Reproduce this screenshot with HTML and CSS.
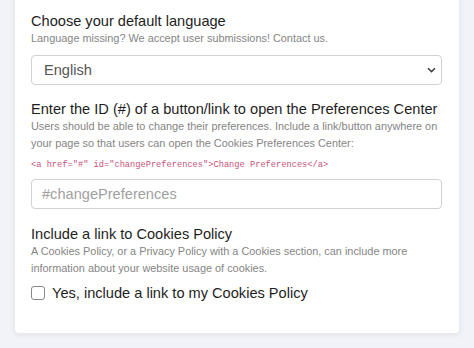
FILE: index.html
```html
<!DOCTYPE html>
<html>
<head>
<meta charset="utf-8">
<link rel="stylesheet" href="styles.css">
</head>
<body>
<div class="page">
  <div class="card">
    <div class="group">
      <h3 class="title">Choose your default language</h3>
      <p class="help">Language missing? We accept user submissions! Contact us.</p>
      <div class="select-wrap">
        <select class="control select">
          <option>English</option>
        </select>
        <svg class="chev" width="9" height="6" viewBox="0 0 9 6"><path d="M1 1.2 L4.5 4.6 L8 1.2" fill="none" stroke="#444" stroke-width="1.6"/></svg>
      </div>
    </div>
    <div class="group">
      <h3 class="title">Enter the ID (#) of a button/link to open the Preferences Center</h3>
      <p class="help">Users should be able to change their preferences. Include a link/button anywhere on your page so that users can open the Cookies Preferences Center:</p>
      <code class="code">&lt;a href="#" id="changePreferences"&gt;Change Preferences&lt;/a&gt;</code>
      <input class="control" type="text" placeholder="#changePreferences">
    </div>
    <div class="group">
      <h3 class="title">Include a link to Cookies Policy</h3>
      <p class="help">A Cookies Policy, or a Privacy Policy with a Cookies section, can include more information about your website usage of cookies.</p>
      <label class="check"><span class="box"></span>Yes, include a link to my Cookies Policy</label>
    </div>
  </div>
</div>
</body>
</html>
```
FILE: styles.css
```css
html, body { margin: 0; padding: 0; }
body {
  background: #f2f3f8;
  font-family: "Liberation Sans", Arial, sans-serif;
  width: 474px;
  height: 348px;
  overflow: hidden;
}
.page { padding: 0 15px; }
.card {
  background: #fff;
  margin-top: -10px;
  height: 343px;
  box-sizing: border-box;
  border-radius: 4px;
  box-shadow: 0 1px 6px rgba(120, 125, 150, 0.18);
  padding: 22px 17px 0 16px;
}
.group { margin-bottom: 14px; }
.group + .group { margin-top: 0; }
.title {
  margin: 0;
  font-weight: normal;
  font-size: 14.6px;
  line-height: 18px;
  color: #1e1e1e;
}
.help {
  margin: 0;
  font-size: 10.9px;
  line-height: 17px;
  color: #858585;
}
.select-wrap { position: relative; margin-top: 8px; }
.control {
  display: block;
  width: 100%;
  box-sizing: border-box;
  height: 30px;
  border: 1px solid #d2d2d2;
  border-radius: 4px;
  background: #fff;
  font-family: "Liberation Sans", Arial, sans-serif;
  font-size: 14.6px;
  color: #555;
  padding: 0 12px;
  outline: none;
}
.select { appearance: none; -webkit-appearance: none; }
.chev { position: absolute; right: 6px; top: 12px; }
input.control { padding: 0 10px; margin-bottom: 0; }
input.control::placeholder { color: #a0a0a0; }
.code {
  display: block;
  font-family: "Liberation Mono", monospace;
  font-size: 8.7px;
  line-height: 12px;
  color: #c7547a;
  margin: 7px 0 8px;
}
.group:nth-child(3) { margin-top: 16px; }
.group:nth-child(2) { margin-top: 15px; }
.group:first-child { margin-bottom: 0; }
.check {
  display: flex;
  align-items: center;
  margin-top: 8px;
  font-size: 14.6px;
  color: #1e1e1e;
}
.box {
  width: 12px;
  height: 12px;
  border: 1px solid #888;
  border-radius: 3px;
  margin-right: 7px;
}
```
